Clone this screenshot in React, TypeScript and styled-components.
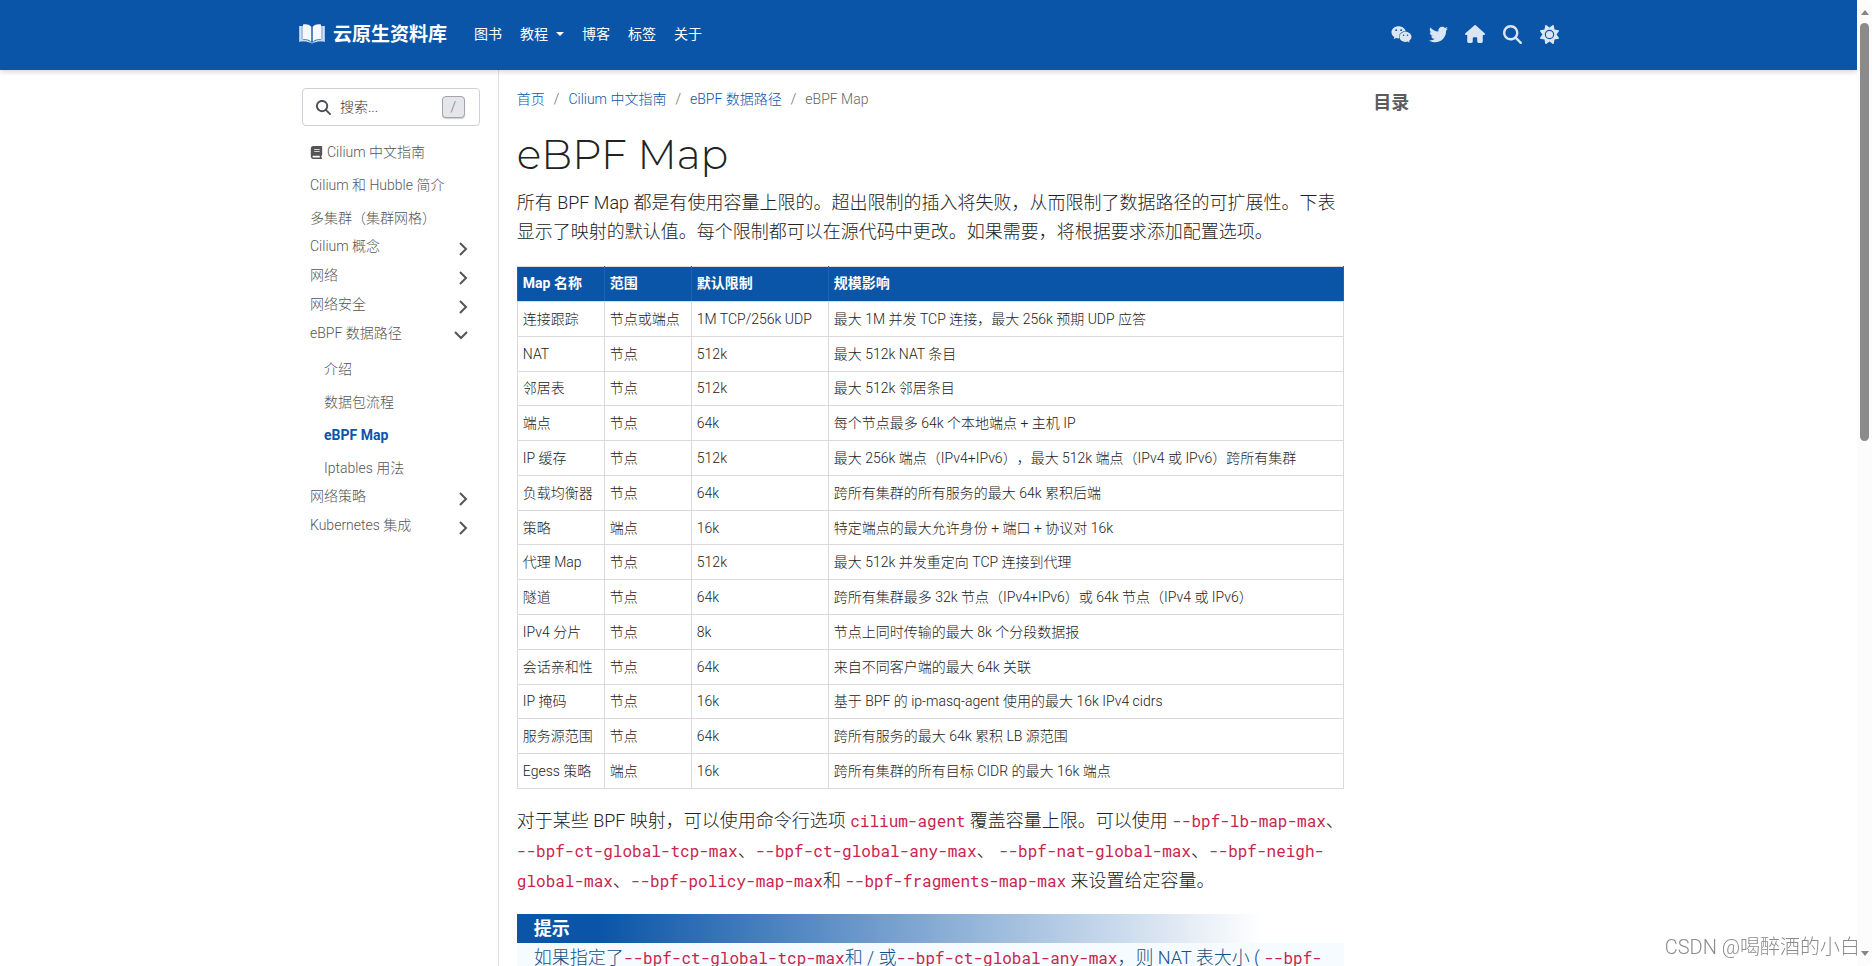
import React from 'react';
import styled, { createGlobalStyle } from 'styled-components';
import { FaWeixin, FaTwitter, FaHouse, FaMagnifyingGlass, FaSun, FaBook } from 'react-icons/fa6';

const blue = '#0a55a8';
const gray = '#555';
const sans = "Roboto, 'Noto Sans CJK SC', sans-serif";
const mono = "'Roboto Mono', 'Liberation Mono', 'Noto Sans CJK SC', monospace";

const GlobalStyle = createGlobalStyle`
  * { box-sizing: border-box; }
  body {
    margin: 0;
    background: #fff;
    color: #222;
    font: 300 18px/29px ${sans};
    text-spacing-trim: space-all;
  }
  a { color: inherit; text-decoration: none; }
  ul, ol { list-style: none; margin: 0; padding: 0; }
  button, input { font: inherit; color: inherit; }
`;

const Viewport = styled.div`
  display: grid;
  grid-template-columns: minmax(0, 1fr) 15px;
  height: 100vh;
  overflow: hidden;
`;

const Page = styled.div`
  display: flex;
  flex-direction: column;
  min-width: 0;
  min-height: 0;
  overflow: hidden;
`;

const Header = styled.header`
  flex: none;
  height: 70px;
  background: ${blue};
  color: #fff;
  box-shadow: 0 2px 5px rgba(0, 0, 0, 0.16);
  z-index: 1;
`;

const HeaderInner = styled.div`
  display: flex;
  align-items: center;
  height: 68px;
  max-width: 1289px;
  margin: 0 auto;
  padding: 0 13px 0 14px;
`;

const Brand = styled.a`
  display: flex;
  align-items: center;
  gap: 7px;
  margin-right: 18px;
  font-size: 19px;
  font-weight: 700;
`;

const NavList = styled.ul`
  display: flex;
  flex: 1;
`;

const NavLink = styled.a`
  display: flex;
  align-items: center;
  gap: 8px;
  padding: 0 9px;
  font-size: 14px;
  font-weight: 400;
`;

const Caret = styled.span`
  border: 4px solid transparent;
  border-top-color: #fff;
  border-bottom: 0;
`;

const Tools = styled.div`
  display: flex;
  gap: 15px;
`;

const ToolButton = styled.button`
  display: flex;
  align-items: center;
  justify-content: center;
  width: 22px;
  height: 24px;
  padding: 0;
  border: 0;
  background: none;
  color: #dae6f3;
`;

const Columns = styled.div`
  display: grid;
  grid-template-columns: 2fr 8fr 2fr;
  flex: 1;
  min-height: 0;
  width: 100%;
  max-width: 1289px;
  margin: 0 auto;
`;

const Sidebar = styled.aside`
  min-width: 0;
  padding: 18px 18px 0;
  border: solid #dfe1e3;
  border-width: 0 1px 1px 0;
  color: ${gray};
  font-size: 14px;
`;

const SearchBox = styled.label`
  display: flex;
  align-items: center;
  height: 38px;
  margin-bottom: 10px;
  padding: 0 14px 0 13px;
  gap: 9px;
  border: 1px solid #cdd0d7;
  border-radius: 4px;
  color: #4b4f5a;
`;

const SearchInput = styled.input`
  flex: 1;
  width: 0;
  padding: 0;
  border: 0;
  outline: 0;
  background: none;
  font-weight: 300;
  &::placeholder { color: #333; opacity: 1; }
`;

const Key = styled.kbd`
  width: 23px;
  height: 22px;
  border: 1px solid #a2a5b0;
  border-radius: 4px;
  background: #e5e6e9;
  box-shadow: 0 1px 1px rgba(0, 0, 0, 0.2);
  color: #777;
  font: 300 14px/20px ${sans};
  text-align: center;
`;

const Tree = styled.ul`
  padding: 0 12px 0 8px;
`;

const SubTree = styled.ul`
  padding: 2px 0 0 14px;
`;

const Leaf = styled.a<{ $active?: boolean }>`
  display: flex;
  align-items: center;
  gap: 4px;
  height: 33px;
  white-space: nowrap;
  color: ${p => (p.$active ? blue : gray)};
  font-weight: ${p => (p.$active ? 700 : 300)};
`;

const Branch = styled.div`
  display: flex;
  align-items: center;
  justify-content: space-between;
  height: 29px;
`;

const BranchLink = styled.a`
  padding-bottom: 6px;
  line-height: 23px;
`;

const Toggle = styled.button`
  display: flex;
  padding: 0 0 2px;
  border: 0;
  background: none;
`;

const Main = styled.main`
  min-width: 0;
  padding: 18px 14px 0 18px;
`;

const Crumbs = styled.ol`
  display: flex;
  height: 23px;
  font-size: 14px;
  line-height: 23px;
  color: #666;
`;

const Crumb = styled.li`
  & + &::before { content: '/'; padding: 0 9px; color: #666; }
  a { color: ${blue}; }
`;

const Title = styled.h1`
  margin: 19px 0 10px;
  font: 300 41px/48px 'Montserrat', Inter, sans-serif;
`;

const Paragraph = styled.p`
  margin: 0 0 18px;
`;

const OptionsParagraph = styled.p`
  margin: 0 -8px 18px 0;
  line-height: 30px;
`;

const Code = styled.code`
  font-family: ${mono};
  font-size: 16px;
  font-weight: 400;
  line-height: 24px;
  color: #c7254e;
`;

const Table = styled.table`
  width: 100%;
  height: 523px;
  margin: 20px 0 17px;
  border-collapse: collapse;
  table-layout: fixed;
  font-size: 14px;
  line-height: 22px;
  th, td { padding: 5px; border: 1px solid #d9dadc; text-align: left; }
  th {
    padding: 5px 5px 7px;
    background: ${blue};
    border-color: #d9dadc #2361ac;
    color: #fff;
    font-weight: 700;
  }
`;

const Col = styled.col<{ $width?: number }>`
  width: ${p => (p.$width ? p.$width + 'px' : 'auto')};
`;

const Callout = styled.section`
  background: #f5fbff;
  color: #164f86;
`;

const CalloutTitle = styled.h2`
  margin: 0;
  padding: 0 17px;
  background: linear-gradient(90deg, ${blue} 10%, #fff 90%);
  color: #fff;
  font-size: 18px;
  font-weight: 700;
  line-height: 29px;
`;

const CalloutBody = styled.p`
  margin: 0;
  padding: 0 17px;
`;

const Toc = styled.nav`
  padding: 18px 15px;
`;

const TocTitle = styled.h2`
  margin: 0;
  color: #5c5c5c;
  font-size: 18px;
  font-weight: 700;
  line-height: 30px;
`;

const ScrollTrack = styled.div`
  display: flex;
  flex-direction: column;
  align-items: center;
  height: 100vh;
  padding: 10px 0;
  background: #fcfcfc;
  border-radius: 0 8px 8px 0;
`;

const ScrollArrow = styled.span<{ $down?: boolean }>`
  border: solid transparent;
  border-width: ${p => (p.$down ? '5px 4px 0' : '0 4px 5px')};
  ${p => (p.$down ? 'border-top-color' : 'border-bottom-color')}: #858585;
`;

const ScrollRail = styled.div`
  flex: 1;
  width: 9px;
  margin: 8px 0;
`;

const ScrollThumb = styled.div`
  height: 45.4%;
  border-radius: 5px;
  background: #8b8b8b;
`;

const Watermark = styled.div`
  position: fixed;
  right: 12px;
  bottom: 4px;
  color: #8c8c8c;
  font-size: 20px;
  line-height: 29px;
`;

const BookLogo = () => (
  <svg width="28" height="22" viewBox="0 0 28 22" aria-hidden="true">
    <path d="M1 3h4v14c3 0 6 0 8 3-3-1-7-2-12-1zM27 3h-4v14c-3 0-6 0-8 3 3-1 7-2 12-1z" fill="#a9c5e6" />
    <path d="M5 1.5c4-.6 7 .3 8.300 2.500v15C11.500 16.500 8.500 16 5 16.300zM23 1.500c-4-.6-7 .3-8.300 2.500v15c1.800-2.500 4.800-3 8.300-2.700z" fill="#f6f8ff" />
    <path d="M2.500 3v14.500c4-.8 8.500 0 11.500 2.700 3-2.700 7.500-3.500 11.500-2.700V3" fill="none" stroke="#e3edfa" strokeWidth=".7" />
  </svg>
);

const Chevron = ({ open }: { open?: boolean }) => (
  <svg width={open ? 14 : 9} height={open ? 9 : 14} fill="none" stroke="#555" strokeWidth="2" aria-hidden="true">
    <path d={open ? 'M1 1l6 6 6-6' : 'M1 1l6 6-6 6'} />
  </svg>
);

const Parent = ({ label, open }: { label: string; open?: boolean }) => (
  <Branch>
    <BranchLink href="#">{label}</BranchLink>
    <Toggle aria-label={label} aria-expanded={!!open}><Chevron open={open} /></Toggle>
  </Branch>
);

const navItems = ['图书', '教程', '博客', '标签', '关于'];

const tools = [
  { label: '微信', icon: <FaWeixin size={21} /> },
  { label: 'Twitter', icon: <FaTwitter size={19} /> },
  { label: '首页', icon: <FaHouse size={20} /> },
  { label: '搜索', icon: <FaMagnifyingGlass size={19} /> },
  { label: '主题', icon: <FaSun size={19} /> },
];

const rows = [
  ['连接跟踪', '节点或端点', '1M TCP/256k UDP', '最大 1M 并发 TCP 连接，最大 256k 预期 UDP 应答'],
  ['NAT', '节点', '512k', '最大 512k NAT 条目'],
  ['邻居表', '节点', '512k', '最大 512k 邻居条目'],
  ['端点', '节点', '64k', '每个节点最多 64k 个本地端点 + 主机 IP'],
  ['IP 缓存', '节点', '512k', '最大 256k 端点（IPv4+IPv6），最大 512k 端点（IPv4 或 IPv6）跨所有集群'],
  ['负载均衡器', '节点', '64k', '跨所有集群的所有服务的最大 64k 累积后端'],
  ['策略', '端点', '16k', '特定端点的最大允许身份 + 端口 + 协议对 16k'],
  ['代理 Map', '节点', '512k', '最大 512k 并发重定向 TCP 连接到代理'],
  ['隧道', '节点', '64k', '跨所有集群最多 32k 节点（IPv4+IPv6）或 64k 节点（IPv4 或 IPv6）'],
  ['IPv4 分片', '节点', '8k', '节点上同时传输的最大 8k 个分段数据报'],
  ['会话亲和性', '节点', '64k', '来自不同客户端的最大 64k 关联'],
  ['IP 掩码', '节点', '16k', '基于 BPF 的 ip-masq-agent 使用的最大 16k IPv4 cidrs'],
  ['服务源范围', '节点', '64k', '跨所有服务的最大 64k 累积 LB 源范围'],
  ['Egess 策略', '端点', '16k', '跨所有集群的所有目标 CIDR 的最大 16k 端点'],
];

export default function App() {
  return (
    <Viewport>
      <GlobalStyle />
      <Page>
        <Header>
          <HeaderInner>
            <Brand href="#"><BookLogo />云原生资料库</Brand>
            <NavList>
              {navItems.map(item => (
                <li key={item}>
                  <NavLink href="#">{item}{item === '教程' && <Caret />}</NavLink>
                </li>
              ))}
            </NavList>
            <Tools>
              {tools.map(t => <ToolButton key={t.label} aria-label={t.label}>{t.icon}</ToolButton>)}
            </Tools>
          </HeaderInner>
        </Header>
        <Columns>
          <Sidebar>
            <SearchBox>
              <FaMagnifyingGlass size={15} />
              <SearchInput placeholder="搜索..." aria-label="搜索" />
              <Key>/</Key>
            </SearchBox>
            <Tree>
              <li><Leaf href="#"><FaBook size={13} />Cilium 中文指南</Leaf></li>
              <li><Leaf href="#">Cilium 和 Hubble 简介</Leaf></li>
              <li><Leaf href="#">多集群（集群网格）</Leaf></li>
              <li><Parent label="Cilium 概念" /></li>
              <li><Parent label="网络" /></li>
              <li><Parent label="网络安全" /></li>
              <li>
                <Parent label="eBPF 数据路径" open />
                <SubTree>
                  <li><Leaf href="#">介绍</Leaf></li>
                  <li><Leaf href="#">数据包流程</Leaf></li>
                  <li><Leaf href="#" $active>eBPF Map</Leaf></li>
                  <li><Leaf href="#">Iptables 用法</Leaf></li>
                </SubTree>
              </li>
              <li><Parent label="网络策略" /></li>
              <li><Parent label="Kubernetes 集成" /></li>
            </Tree>
          </Sidebar>
          <Main>
            <Crumbs>
              <Crumb><a href="#">首页</a></Crumb>
              <Crumb><a href="#">Cilium 中文指南</a></Crumb>
              <Crumb><a href="#">eBPF 数据路径</a></Crumb>
              <Crumb>eBPF Map</Crumb>
            </Crumbs>
            <Title>eBPF Map</Title>
            <Paragraph>
              所有 BPF Map 都是有使用容量上限的。超出限制的插入将失败，从而限制了数据路径的可扩展性。下表显示了映射的默认值。每个限制都可以在源代码中更改。如果需要，将根据要求添加配置选项。
            </Paragraph>
            <Table>
              <colgroup><Col $width={87} /><Col $width={87} /><Col $width={137} /><Col /></colgroup>
              <thead>
                <tr><th>Map 名称</th><th>范围</th><th>默认限制</th><th>规模影响</th></tr>
              </thead>
              <tbody>
                {rows.map(row => (
                  <tr key={row[0]}>{row.map((cell, i) => <td key={i}>{cell}</td>)}</tr>
                ))}
              </tbody>
            </Table>
            <OptionsParagraph>
              对于某些 BPF 映射，可以使用命令行选项 <Code>cilium-agent</Code> 覆盖容量上限。可以使用 <Code>--bpf-lb-map-max</Code>、 <Code>--bpf-ct-global-tcp-max</Code>、<Code>--bpf-ct-global-any-max</Code>、 <Code>--bpf-nat-global-max</Code>、<Code>--bpf-neigh-global-max</Code>、<Code>--bpf-policy-map-max</Code>和 <Code>--bpf-fragments-map-max</Code> 来设置给定容量。
            </OptionsParagraph>
            <Callout>
              <CalloutTitle>提示</CalloutTitle>
              <CalloutBody>
                如果指定了<Code>--bpf-ct-global-tcp-max</Code>和 / 或<Code>--bpf-ct-global-any-max</Code>，则 NAT 表大小 ( <Code>--bpf-</Code>
              </CalloutBody>
            </Callout>
          </Main>
          <Toc aria-label="目录">
            <TocTitle>目录</TocTitle>
          </Toc>
        </Columns>
      </Page>
      <ScrollTrack aria-hidden="true">
        <ScrollArrow />
        <ScrollRail><ScrollThumb /></ScrollRail>
        <ScrollArrow $down />
      </ScrollTrack>
      <Watermark>CSDN @喝醉酒的小白</Watermark>
    </Viewport>
  );
}
